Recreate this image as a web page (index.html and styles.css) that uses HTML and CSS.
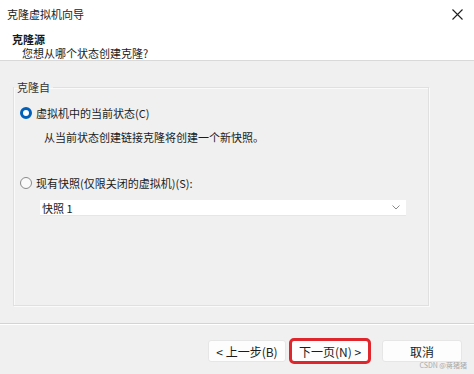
FILE: index.html
```html
<!DOCTYPE html>
<html lang="zh-CN">
<head>
<meta charset="UTF-8">
<meta name="viewport" content="width=device-width, initial-scale=1.0">
<title>克隆虚拟机向导</title>
<link rel="stylesheet" href="styles.css">
</head>
<body>
<div class="window">
    <div class="top">
        <div class="titlebar">
            <span class="title">克隆虚拟机向导</span>
            <svg class="close" width="11" height="11" viewBox="0 0 11 11">
                <path d="M0.5 0.5 L10.5 10.5 M10.5 0.5 L0.5 10.5" stroke="#1f1f1f" stroke-width="1.1" fill="none"/>
            </svg>
        </div>
        <div class="header">
            <div class="header-title">克隆源</div>
            <div class="header-sub">您想从哪个状态创建克隆?</div>
        </div>
    </div>

    <div class="content">
        <fieldset class="group">
            <legend>克隆自</legend>
            <div class="group-body">
                <label class="radio-row">
                    <span class="radio checked"></span>
                    <span>虚拟机中的当前状态(C)</span>
                </label>
                <div class="desc">从当前状态创建链接克隆将创建一个新快照。</div>
                <label class="radio-row second">
                    <span class="radio"></span>
                    <span>现有快照(仅限关闭的虚拟机)(S):</span>
                </label>
                <div class="select">
                    <span>快照 1</span>
                    <svg width="8" height="5" viewBox="0 0 8 5">
                        <path d="M0.5 0.5 L4 4 L7.5 0.5" stroke="#8a8a8a" stroke-width="1" fill="none"/>
                    </svg>
                </div>
            </div>
        </fieldset>
    </div>

    <div class="footer">
        <button class="btn">&lt; 上一步(B)</button>
        <button class="btn btn-next">下一页(N) &gt;</button>
        <button class="btn btn-cancel">取消</button>
        <span class="watermark">CSDN @蒋猪猪</span>
    </div>
</div>
</body>
</html>
```

FILE: styles.css
```css
body {
    margin: 0;
    width: 474px;
    height: 374px;
    overflow: hidden;
    background: #f0f0f0;
    font-family: "Microsoft YaHei UI", "Noto Sans CJK SC", sans-serif;
    font-size: 11px;
    color: #1b1b1b;
}
.window {
    position: relative;
    display: flex;
    flex-direction: column;
    height: 374px;
}
.top {
    height: 60px;
    background: #fff;
    border-bottom: 1px solid #d9d9d9;
}
.titlebar {
    height: 28px;
    display: flex;
    align-items: center;
    justify-content: space-between;
    padding: 0 11px 0 7px;
}
.header {
    padding: 4px 0 0 12px;
    line-height: 14px;
}
.header-title {
    font-weight: bold;
}
.header-sub {
    padding-left: 10px;
}
.content {
    flex: 1;
}
.group {
    box-sizing: border-box;
    width: 416px;
    height: 226px;
    margin: 19px 0 0 13px;
    padding: 0;
    border: 1px solid #e0e0e0;
    box-shadow: inset 1px 1px 0 #fafafa, 1px 1px 0 #fafafa;
}
.group legend {
    margin-left: 0;
    padding: 0 3px;
    line-height: 14px;
    color: #333;
}
.group-body {
    display: flex;
    flex-direction: column;
    padding: 11px 0 0 6px;
}
.radio-row {
    display: flex;
    align-items: center;
    gap: 4px;
    height: 16px;
}
.radio-row.second {
    margin-top: 30px;
}
.radio {
    box-sizing: border-box;
    width: 12px;
    height: 12px;
    border-radius: 50%;
    border: 1px solid #8a8a8a;
    background: #fafafa;
}
.radio.checked {
    border: 3.5px solid #005fb8;
    background: #fff;
}
.desc {
    margin-top: 8px;
    height: 16px;
    line-height: 16px;
    padding-left: 24px;
}
.select {
    box-sizing: border-box;
    display: flex;
    align-items: center;
    justify-content: space-between;
    width: 366px;
    height: 16px;
    margin: 9px 0 0 20px;
    padding: 0 6px 0 2px;
    background: #fff;
    border-bottom: 1px solid #e6e6e6;
}
.footer {
    display: flex;
    justify-content: flex-end;
    align-items: flex-start;
    height: 51px;
    padding: 16px 12px 0 0;
    box-sizing: border-box;
    border-top: 1px solid #d4d4d4;
    box-shadow: inset 0 1px 0 #fff;
}
.btn {
    box-sizing: border-box;
    width: 78px;
    height: 22px;
    padding: 0;
    background: #fdfdfd;
    border: 1px solid #e6e6e6;
    border-radius: 3px;
    font-family: inherit;
    font-size: 12px;
    color: #1b1b1b;
}
.btn-next {
    margin-left: 5px;
    border-right-color: #9cc6ea;
    outline: 3px solid #e0262d;
    outline-offset: -1px;
}
.btn-cancel {
    width: 80px;
    margin-left: 13px;
}
.watermark {
    position: absolute;
    right: 7px;
    bottom: 4px;
    font-size: 7px;
    color: #a9a9a9;
}
```
